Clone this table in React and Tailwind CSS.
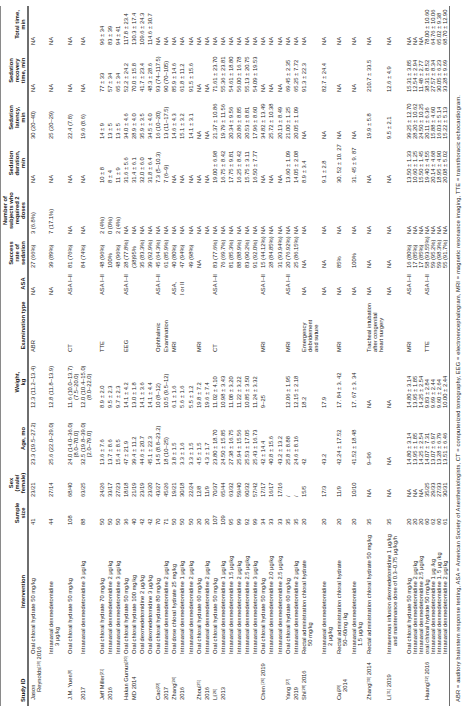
import React from "react";

// table is drawn unrotated (712 x 474) and turned -90deg into the 474 x 712 page
const cols = [
  { key: "s", w: 46, head: "Study ID", left: true },
  { key: "i", w: 129, head: "Intervention" },
  { key: "n", w: 28, head: "Sample\nsize" },
  { key: "sex", w: 32, head: "Sex\n(male/\nfemale)" },
  { key: "age", w: 57, head: "Age, mo" },
  { key: "wt", w: 56, head: "Weight,\nkg" },
  { key: "ex", w: 57, head: "Examination type" },
  { key: "asa", w: 27, head: "ASA" },
  { key: "sr", w: 34, head: "Success\nrate of\nsedation" },
  { key: "d2", w: 51, head: "Number of\nsubjects who\nrequired 2\ndoses" },
  { key: "dur", w: 44, head: "Sedation\nduration,\nmin" },
  { key: "lat", w: 47, head: "Sedation\nlatency,\nmin" },
  { key: "rec", w: 47, head: "Sedation\nrecovery\ntime, min" },
  { key: "tot", w: 45, head: "Total time,\nmin" },
];

const K = ["s", "i", "n", "sex", "age", "wt", "ex", "asa", "sr", "d2", "dur", "lat", "rec", "tot"];
const row = (h, ...vals) => {
  const r = { h };
  K.forEach((k, i) => (r[k] = vals[i] || ""));
  return r;
};
const dn = (d) => `Intranasal dexmedetomidine ${d} μg/kg`;
const D = 8.1; // dense single-line rows
const B = 6; // last block

const rows = [
  row(18, "Jason\n>Reynolds^[18]^ 2016", "Oral chloral hydrate 50 mg/kg", "41", "23/21", "23.3 (19.5–27.2)", "12.3 (11.2–13.4)", "ABR", "NA", "27 (66%)", "3 (6.8%)", "NA", "30 (20–40)", "NA", "NA"),
  row(19, "", "Intranasal dexmedetomidine\n>3 μg/kg", "44", "27/14", "25.6 (22.0–29.0)", "12.8 (11.8–13.9)", "", "NA", "39 (89%)", "7 (17.1%)", "NA", "25 (20–29)", "NA", "NA"),
  row(13, "J.M. Yuen^[8]^", "Oral chloral hydrate 50 mg/kg", "108", "68/40", "24.0 (14.0–36.0)\n>[8.0–70.0]", "11.6 (10.0–13.7)\n>(7.5–20.0)", "CT", "ASA I–II", "81 (76%)", "NA", "NA", "22.4 (7.8)", "NA", "NA"),
  row(19, "2017", dn(3), "88", "63/25", "32.5 (19.8–39.0)\n>[2.0–79.0]", "12.0 (10.4–15.0)\n>(8.0–22.0)", "", "", "84 (74%)", "NA", "NA", "19.6 (8.6)", "NA", "NA"),
  row(D, "Jeff Miller^[21]^", "Oral chloral hydrate 70 mg/kg", "50", "24/26", "13.6 ± 7.6", "8.9 ± 2.0", "TTE", "ASA I–II", "48 (96%)", "2 (4%)", "10 ± 8", "14 ± 9", "77 ± 33", "96 ± 34"),
  row(D, "2016", dn(2), "50", "33/17", "13.7 ± 8.6", "9.5 ± 2.3", "", "", "100%", "0 (0%)", "8 ± 4", "13 ± 5", "57 ± 34", "83 ± 39"),
  row(D, "", dn(3), "50", "27/23", "15.4 ± 8.5", "9.7 ± 2.3", "", "", "48 (96%)", "2 (4%)", "11 ± 9", "13 ± 5", "65 ± 34", "94 ± 41"),
  row(D, "Hakan Gumus^[20]^", "Oral chloral hydrate 50 mg/kg", "36", "18/18", "47 ± 21.9", "14.1 ± 4.2", "EEG", "ASA I–II", "28 (77.8%)", "NA", "31.6 ± 5.6", "34.0 ± 4.6", "52.2 ± 24.2", "117.8 ± 23.4"),
  row(D, "MD 2014", "Oral chloral hydrate 100 mg/kg", "40", "21/19", "39.4 ± 11.2", "13.0 ± 1.8", "", "", "(38)95%", "NA", "31.4 ± 6.1", "28.9 ± 4.0", "70.0 ± 15.8", "130.3 ± 17.4"),
  row(D, "", "Oral dexmedetomidine 2 μg/kg", "42", "23/19", "44.6 ± 20.7", "14.1 ± 3.6", "", "", "35 (83.3%)", "NA", "32.0 ± 6.0", "35.9 ± 3.5", "41.7 ± 23.4", "109.6 ± 24.3"),
  row(D, "", "Oral dexmedetomidine 3 μg/kg", "42", "23/20", "45.1 ± 22.3", "14.1 ± 4.4", "", "", "39 (92.9%)", "NA", "31.8 ± 6.4", "34.5 ± 4.0", "48.3 ± 28.6", "114.6 ± 30.7"),
  row(D, "Cao^[22]^", "Oral chloral hydrate 80 mg/kg", "70", "43/27", "14.5 (8.8–23.2)", "10 (8–12)", "Ophthalmic", "ASA I–II", "45 (64.3%)", "NA", "7.3 (5–10.3)", "16 (10–20)", "93 (74–117.5)", "NA"),
  row(D, "2017", dn(2), "71", "45/26", "18 (10–25)", "10.5 (9.5–12)", "Examination", "", "61 (85.9%)", "NA", "7 (6–9)", "13 (11–17.5)", "90 (70–105)", "NA"),
  row(D, "Zhang^[24]^", "Oral dose chloral hydrate 25 mg/kg", "50", "19/21", "3.8 ± 1.5", "6.1 ± 1.6", "MRI", "ASA,", "40 (80%)", "NA", "NA", "14.6 ± 4.3", "85.9 ± 14.6", "NA"),
  row(D, "2016", dn(1), "50", "30/18", "3.3 ± 1.6", "5.6 ± 1.6", "", "I or II", "47 (94%)", "NA", "NA", "15.1 ± 3.2", "61.8 ± 11.2", "NA"),
  row(D, "", dn(2), "50", "22/24", "3.3 ± 1.5", "5.5 ± 1.2", "", "", "49 (98%)", "NA", "NA", "14.1 ± 3.1", "91.5 ± 15.6", "NA"),
  row(D, "Zhou^[25]^", "Oral chloral hydrate 60 mg/kg", "20", "12/8", "4.5 ± 1.5", "19.8 ± 7.2", "MRI", "", "NA", "NA", "NA", "NA", "NA", "NA"),
  row(D, "2016", dn(2), "20", "11/9", "4.3 ± 1.7", "19.6 ± 7.4", "", "", "", "NA", "NA", "NA", "NA", "NA"),
  row(D, "Li^[26]^", "Oral chloral hydrate 50 mg/kg", "107", "70/37", "23.80 ± 18.70", "11.02 ± 4.10", "CT", "ASA I–II", "83 (77.6%)", "NA", "19.00 ± 6.98", "21.37 ± 10.86", "71.61 ± 23.70", "NA"),
  row(D, "2013", dn(1), "109", "65/44", "24.50 ± 15.85", "10.98 ± 3.43", "", "", "76 (69.7%)", "NA", "16.75 ± 8.42", "19.79 ± 11.56", "55.36 ± 23.81", "NA"),
  row(D, "", dn(1.5), "95", "63/32", "27.38 ± 16.75", "11.08 ± 3.20", "", "", "81 (85.3%)", "NA", "17.75 ± 9.81", "20.34 ± 9.56", "54.61 ± 18.80", "NA"),
  row(D, "", dn(2), "99", "59/40", "25.94 ± 15.56", "11.22 ± 3.22", "", "", "88 (88.9%)", "NA", "16.25 ± 8.42", "20.86 ± 8.85", "56.00 ± 16.78", "NA"),
  row(D, "", dn(2.5), "92", "60/32", "25.53 ± 17.05", "10.85 ± 3.50", "", "", "83 (90.2%)", "NA", "15.75 ± 3.11", "20.53 ± 8.81", "55.13 ± 20.75", "NA"),
  row(D, "", dn(3), "99", "57/42", "25.43 ± 16.73", "11.24 ± 3.32", "", "", "91 (92.0%)", "NA", "16.50 ± 7.77", "17.96 ± 8.60", "54.09 ± 19.53", "NA"),
  row(D, "Chen ^[26]^ 2019", "Oral chloral hydrate 50 mg/kg", "34", "17/17", "42 ± 14.4", "9–25", "MRI", "ASA I–II", "15 (44.12%)", "NA", "NA", "34.82 ± 13.49", "NA", "NA"),
  row(D, "", dn("2.0"), "33", "16/17", "40.8 ± 15.6", "", "", "", "28 (84.85%)", "NA", "NA", "25.72 ± 10.38", "NA", "NA"),
  row(D, "", dn(2.5), "33", "17/16", "43.2 ± 13.2", "", "", "", "31 (93.94%)", "NA", "NA", "20.13 ± 8.49", "NA", "NA"),
  row(D, "Yang ^[27]^", "Oral chloral hydrate 60 mg/kg", "35", "/", "25.8 ± 8.88", "12.06 ± 1.95", "MRI", "ASA I–II", "20 (76.92%)", "NA", "13.60 ± 1.09", "21.00 ± 1.25", "69.45 ± 2.35", "NA"),
  row(D, "2019", dn(2), "35", "/", "24.6 ± 8.16", "12.15 ± 2.18", "", "", "25 (86.15%)", "NA", "14.05 ± 2.08", "20.05 ± 1.09", "65.25 ± 7.72", "NA"),
  row(20, "Shi^[28]^ 2016", "Rectal administration chloral hydrate\n>50 mg/kg", "20", "15/5", "42", "18.2", "Emergency\ndebridement\nand suture", "NA", "NA", "NA", "8.9 ± 3.4", "NA", "91.3 ± 22.3", "NA"),
  row(15, "", "Intranasal dexmedetomidine\n>2 μg/kg", "20", "17/3", "43.2", "17.9", "", "NA", "NA", "NA", "9.1 ± 2.8", "NA", "82.7 ± 24.4", "NA"),
  row(15, "Cui^[29]^\n>2014", "Rectal administration chloral hydrate\n>50–60mg /kg", "20", "11/9", "42.24 ± 17.52", "17. 84 ± 3. 42", "MRI", "NA", "85%", "NA", "30. 52 ± 10. 27", "NA", "NA", "NA"),
  row(15, "", "Intranasal dexmedetomidine\n>1.5 μg/kg", "20", "10/10", "41.52 ± 18.48", "17. 67 ± 3. 34", "", "NA", "100%", "NA", "31. 45 ± 9. 87", "NA", "NA", "NA"),
  row(20, "Zhang^[30]^ 2014", "Rectal administration chloral hydrate 50 mg/kg", "35", "NA", "9–96", "NA", "Tracheal intubation\nafter congenital\nheart surgery", "NA", "NA", "NA", "NA", "19.9 ± 5.8", "210.7 ± 33.5", "NA"),
  row(20, "Li^[31]^ 2019", "Intravenous infusion dexmedetomidine 1 μg/kg\n>and maintenance dose of 0.3–0.75 μg/kg/h", "35", "NA", "NA", "NA", "", "NA", "NA", "NA", "NA", "9.5 ± 2.1", "12.6 ± 4.9", "NA"),
  row(B, "", "Oral chloral hydrate 50 mg/kg", "20", "NA", "14.80 ± 3.14", "14.80 ± 3.14", "MRI", "ASA I–II", "16 (80%)", "NA", "13.50 ± 1.33", "39.25 ± 12.70", "15.31 ± 3.85", "NA"),
  row(B, "", dn(2), "20", "NA", "13.95 ± 1.85", "13.95 ± 1.85", "", "", "17 (85%)", "NA", "10.60 ± 1.25", "28.20 ± 10.62", "12.54 ± 2.94", "NA"),
  row(B, "", dn(2.5), "20", "NA", "14.25 ± 2.54", "14.25 ± 2.54", "", "", "17 (85%)", "NA", "15.50 ± 1.45", "24.50 ± 10.25", "11.48 ± 2.77", "NA"),
  row(B, "Huang^[32]^ 2016", "oral chloral hydrate 50 mg/kg", "60", "35/25", "14.07 ± 7.31", "9.83 ± 2.84", "TTE", "ASA I–II", "58 (93.55%)", "NA", "19.40 ± 4.55", "20.11 ± 6.36", "38.31 ± 8.52", "78.00 ± 10.60"),
  row(B, "", "Intranasal dexmedetomidine 1 μg /kg", "62", "29/33", "13.07 ± 6.97", "9.69 ± 2.44", "", "", "59 (95.2%)", "NA", "20.14 ± 4.68", "15.88 ± 4.60", "27.57 ± 8.34", "64.76 ± 10.06"),
  row(B, "", "Intranasal dexmedetomidine 1. 5 μg /kg", "60", "27/33", "13.28 ± 6.79", "9.60 ± 2.64", "", "", "59 (98.3%)", "NA", "18.95 ± 4.90", "16.03 ± 5.14", "30.05 ± 6.23", "65.02 ± 9.38"),
  row(B, "", dn(2), "61", "30/31", "13.51 ± 6.46", "10.00 ± 2.44", "", "", "55 (91.7%)", "NA", "20.08 ± 5.02", "15.22 ± 5.13", "33.28 ± 9.69", "68.70 ± 12.90"),
];

function Txt({ v }) {
  return v.split("\n").map((line, j) => {
    const indent = line.startsWith(">");
    const parts = (indent ? line.slice(1) : line).split("^");
    return (
      <div key={j} className={indent ? "pl-[8px] whitespace-nowrap" : "whitespace-nowrap"}>
        {parts.map((p, k) =>
          k % 2 ? (
            <sup key={k} className="text-[4px] relative -top-[1px]">
              {p}
            </sup>
          ) : (
            p
          )
        )}
      </div>
    );
  });
}

export default function App() {
  return (
    <div className="w-[474px] h-[712px] overflow-hidden bg-white">
      <div className="w-[712px] h-[474px] origin-top-left -rotate-90 translate-y-[712px] bg-white text-[#222] font-['Liberation_Sans',Arial,sans-serif] text-[5.8px] leading-[6px]">
        <div className="h-px bg-[#8a8a8a] mx-[6px]" />
        {/* header */}
        <div className="flex items-end h-[26px] pl-[10px] pb-[1px] font-bold">
          {cols.map((c) => (
            <div
              key={c.key}
              className={c.left ? "shrink-0 text-left" : "shrink-0 text-center"}
              style={{ width: c.w }}
            >
              <Txt v={c.head} />
            </div>
          ))}
        </div>
        <div className="h-[1.5px] bg-[#6e6e6e] mx-[6px]" />
        {/* body */}
        <div className="pl-[10px] pt-[1px]">
          {rows.map((r, idx) => (
            <div key={idx} className="flex items-start" style={{ height: r.h }}>
              {cols.map((c) => (
                <div key={c.key} className="shrink-0 pl-[2px]" style={{ width: c.w }}>
                  <Txt v={r[c.key]} />
                </div>
              ))}
            </div>
          ))}
        </div>
        <div className="h-px bg-[#6e6e6e] mx-[6px] mt-[1px]" />
        <p className="pl-[10px] pt-[5px] whitespace-nowrap tracking-[0.1px]">
          ABR = auditory brainstem response testing, ASA = American Society of Anesthesiologists, CT = computerized tomography, EEG = electroencephalogram, MRI = magnetic resonance imaging, TTE = transthoracic echocardiogram.
        </p>
      </div>
    </div>
  );
}
